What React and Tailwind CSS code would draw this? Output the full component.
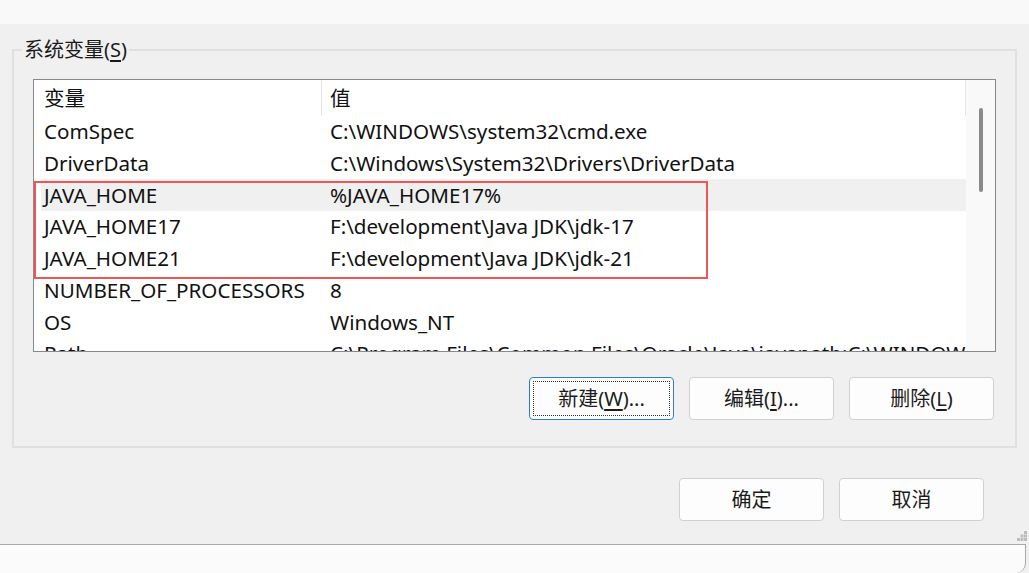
import React from 'react'

const ROWS = [
  { name: 'ComSpec', value: 'C:\\WINDOWS\\system32\\cmd.exe' },
  { name: 'DriverData', value: 'C:\\Windows\\System32\\Drivers\\DriverData' },
  { name: 'JAVA_HOME', value: '%JAVA_HOME17%', hover: true },
  { name: 'JAVA_HOME17', value: 'F:\\development\\Java JDK\\jdk-17' },
  { name: 'JAVA_HOME21', value: 'F:\\development\\Java JDK\\jdk-21' },
  { name: 'NUMBER_OF_PROCESSORS', value: '8' },
  { name: 'OS', value: 'Windows_NT' },
  { name: 'Path', value: 'C:\\Program Files\\Common Files\\Oracle\\Java\\javapath;C:\\WINDOWS\\system32;C:\\WINDOWS;C:\\WINDOWS\\System32\\Wbem' },
]

function Btn({ children, focused }) {
  if (focused) {
    return (
      <button className="w-[145px] h-[43px] rounded-[4px] border border-[#2f7fd0] bg-[#fdfdfd] p-[3px] text-[20px] text-[#1b1b1b]">
        <div className="h-full w-full border border-dotted border-[#333] flex items-center justify-center">{children}</div>
      </button>
    )
  }
  return (
    <button className="w-[145px] h-[43px] rounded-[4px] border border-[#d0d0d0] bg-[#fdfdfd] flex items-center justify-center text-[20px] text-[#1b1b1b]">
      {children}
    </button>
  )
}

export default function App() {
  return (
    <div className="w-[1029px] h-[573px] overflow-hidden bg-[#f0f0f0] flex flex-col font-['Noto_Sans','Noto_Sans_CJK_SC',sans-serif] text-[#111]">
      <div className="h-[24px] bg-[#f9f9f9] shrink-0" />

      {/* 系统变量 group */}
      <fieldset className="mt-[13px] ml-[12px] w-[1005px] border-2 border-[#e0e0e0] pt-[16px] pb-[26px]">
        <legend className="ml-[8px] px-[2px] text-[20px] leading-[26px] text-[#1a1a1a]">
          系统变量(<span className="underline underline-offset-[3px]">S</span>)
        </legend>

        <div className="px-[19px]">
          <div className="relative w-[963px] h-[273px] border border-[#868a90] bg-white flex overflow-hidden">
            <div className="w-[932px] flex flex-col text-[20.6px]">
              <div className="h-[36px] flex shrink-0">
                <div className="w-[288px] pl-[10px] flex items-center border-r border-[#e5e5e5]">变量</div>
                <div className="flex-1 pl-[8px] flex items-center border-r border-[#e5e5e5]">值</div>
              </div>
              {ROWS.map(r => (
                <div
                  key={r.name}
                  className={`h-[31.7px] shrink-0 flex whitespace-nowrap ${r.hover ? 'bg-[#f0f0f0] ml-[7px]' : ''}`}
                >
                  <div className={`${r.hover ? 'w-[281px] pl-[3px]' : 'w-[288px] pl-[10px]'} flex items-center`}>{r.name}</div>
                  <div className="flex-1 pl-[8px] pr-[24px] flex items-center overflow-hidden">{r.value}</div>
                </div>
              ))}
            </div>

            {/* scrollbar */}
            <div className="flex-1 bg-[#f9f9f9] flex justify-center pt-[28px]">
              <div className="w-[4px] h-[84px] rounded-full bg-[#8a8a8a]" />
            </div>

            {/* annotation box */}
            <div className="absolute left-0 top-[101px] w-[674px] h-[98px] border-2 border-[#ef5656] pointer-events-none" />
          </div>

          <div className="mt-[25px] mr-[2px] flex justify-end gap-[15px]">
            <Btn focused>新建(<span className="underline underline-offset-[3px]">W</span>)...</Btn>
            <Btn>编辑(<span className="underline underline-offset-[3px]">I</span>)...</Btn>
            <Btn>删除(<span className="underline underline-offset-[3px]">L</span>)</Btn>
          </div>
        </div>
      </fieldset>

      <div className="mt-[30px] mr-[45px] flex justify-end gap-[15px]">
        <Btn>确定</Btn>
        <Btn>取消</Btn>
      </div>

      <div className="flex-1 flex justify-end items-end pr-[2px] pb-[3px]">
        <svg width="10" height="10" viewBox="0 0 10 10">
          <rect x="7" y="0" width="3" height="3" fill="#bdbdbd" />
          <rect x="3.5" y="3.5" width="3" height="3" fill="#bdbdbd" />
          <rect x="7" y="3.5" width="3" height="3" fill="#bdbdbd" />
          <rect x="0" y="7" width="3" height="3" fill="#bdbdbd" />
          <rect x="3.5" y="7" width="3" height="3" fill="#bdbdbd" />
          <rect x="7" y="7" width="3" height="3" fill="#bdbdbd" />
        </svg>
      </div>

      <div className="h-[29px] shrink-0 bg-[#fbfbfb] border-t border-r border-[#a8a8a8] rounded-br-[10px] mr-[3px]" />
    </div>
  )
}
